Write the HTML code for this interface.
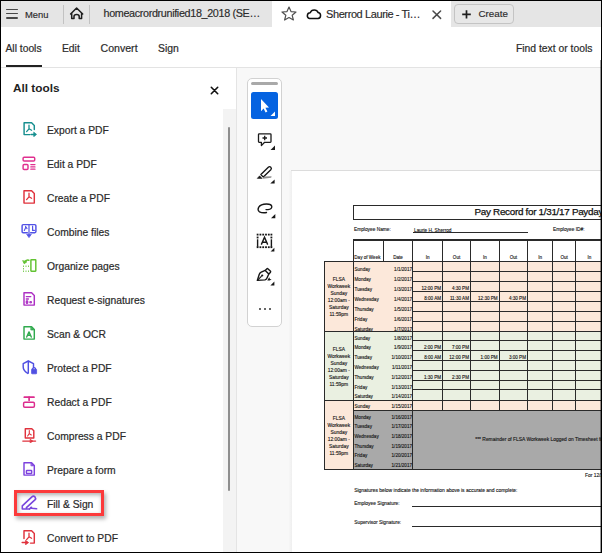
<!DOCTYPE html>
<html><head><meta charset="utf-8">
<style>
*{box-sizing:border-box}
html,body{margin:0;padding:0;width:602px;height:553px;overflow:hidden;background:#fff}
body{position:relative;font-family:"Liberation Sans",sans-serif;color:#2c2c2c}
.a{position:absolute}
.t{position:absolute;white-space:nowrap;line-height:1}
#frame{position:absolute;left:0;top:0;width:602px;height:553px;border:1px solid #000;pointer-events:none;z-index:50}
/* top tab bar */
#tabbar{left:1px;top:1px;width:600px;height:26px;background:#e5e5e5}
#tab2{left:272px;top:1px;width:179px;height:27px;background:#fff}
.sep{position:absolute;width:1.3px;background:#c2c2c2}
/* nav */
#navline{left:1px;top:67px;width:600px;height:1px;background:#e3e3e3}
/* panel */
#divider{left:236px;top:68px;width:1px;height:484px;background:#e4e4e4}
#docbg{left:237px;top:68px;width:364px;height:484px;background:#f8f8f8}
#track{left:223px;top:109px;width:13px;height:443px;background:#f3f3f3}
#thumb{left:228px;top:127px;width:2px;height:364px;background:#8e8e8e;border-radius:1px}
.tool{position:absolute;left:47px;font-size:10.3px;color:#2a2a2a;white-space:nowrap;line-height:1;-webkit-text-stroke:0.2px #2a2a2a}
.ic{position:absolute;left:21px;width:16px;height:16px}
/* toolbar */
#tb{left:247px;top:78px;width:35px;height:249px;background:#fff;border:1.7px solid #d2d2d2;border-radius:5px}
.ps{color:#151515;-webkit-text-stroke:0.12px #151515}
.pt{}
</style></head>
<body>
<div id="frame"></div>
<div id="rline" class="a" style="left:600px;top:60px;width:1px;height:493px;background:rgba(0,0,0,0.4);z-index:49"></div>
<div class="a" id="tabbar"></div>
<div class="a" id="tab2"></div>
<div class="a" id="docbg"></div>
<div class="a" id="navline"></div>
<div class="a" id="divider"></div>

<!-- TABBAR -->
<div class="a" style="left:6px;top:8.6px;width:12px;height:1.8px;background:#484848;border-radius:1px"></div>
<div class="a" style="left:6px;top:12.7px;width:12px;height:1.8px;background:#484848;border-radius:1px"></div>
<div class="a" style="left:6px;top:17px;width:12px;height:1.8px;background:#484848;border-radius:1px"></div>
<div class="t" style="left:25px;top:9.6px;font-size:9.4px;color:#2a2a2a;-webkit-text-stroke:0.15px #2a2a2a">Menu</div>
<div class="sep" style="left:63px;top:4.7px;height:19px"></div>
<svg class="a" style="left:69px;top:6px" width="15" height="14" viewBox="0 0 15 14"><path d="M1.6 8 L7.6 2 L13.7 8 M2.7 7.2 V12.5 H5 V10.4 Q5 8.6 7.6 8.6 Q10.2 8.6 10.2 10.4 V12.5 H12.6 V7.2" fill="none" stroke="#1e1e1e" stroke-width="1.5" stroke-linejoin="round" stroke-linecap="round"/></svg>
<div class="sep" style="left:89px;top:4.7px;height:19px"></div>
<div class="t" style="left:103.5px;top:8.2px;font-size:10.8px;letter-spacing:-0.35px;color:#2a2a2a;-webkit-text-stroke:0.15px #2a2a2a">homeacrordrunified18_2018 (SE…</div>
<svg class="a" style="left:281px;top:6px" width="16" height="15" viewBox="0 0 16 15"><path d="M8 1 L10 5.6 L15 6 L11.2 9.3 L12.4 14 L8 11.5 L3.6 14 L4.8 9.3 L1 6 L6 5.6 Z" fill="none" stroke="#505050" stroke-width="1.2" stroke-linejoin="round"/></svg>
<svg class="a" style="left:305px;top:8px" width="17" height="12" viewBox="0 0 17 12"><path d="M4.5 10.5 H13 A3 3 0 0 0 13.2 4.6 A4.3 4.3 0 0 0 5.2 4.8 A2.9 2.9 0 0 0 4.5 10.5 Z" fill="none" stroke="#111" stroke-width="1.5" stroke-linejoin="round"/></svg>
<div class="t" style="left:326px;top:9.2px;font-size:11px;letter-spacing:-0.4px;color:#2a2a2a;-webkit-text-stroke:0.15px #2a2a2a">Sherrod Laurie - Ti…</div>
<svg class="a" style="left:431px;top:9px" width="11" height="11" viewBox="0 0 11 11"><path d="M2 2 L9.6 9.4 M9.6 2 L2 9.4" stroke="#4a4a4a" stroke-width="1.5" stroke-linecap="round"/></svg>
<div class="a" style="left:454px;top:4px;width:60px;height:20px;border:1px solid #c4c4c4;border-radius:4px;background:#e7e7e7"></div>
<svg class="a" style="left:461px;top:9px" width="11" height="11" viewBox="0 0 11 11"><path d="M5.5 1.2 V9.6 M1.2 5.4 H9.8" stroke="#1e1e1e" stroke-width="1.7"/></svg>
<div class="t" style="left:478.5px;top:8.9px;font-size:9.8px;color:#2a2a2a;-webkit-text-stroke:0.15px #2a2a2a">Create</div>
<!-- NAV -->
<div class="t" style="left:5.5px;top:43.7px;-webkit-text-stroke:0.2px #2a2a2a;font-size:10.3px;color:#2c2c2c">All tools</div>
<div class="a" style="left:6px;top:65px;width:36px;height:2px;background:#222"></div>
<div class="t" style="left:62px;top:43.7px;-webkit-text-stroke:0.2px #2a2a2a;font-size:10.3px;color:#2c2c2c">Edit</div>
<div class="t" style="left:100.5px;top:42.7px;-webkit-text-stroke:0.2px #2a2a2a;font-size:10.6px;color:#2c2c2c">Convert</div>
<div class="t" style="left:158px;top:43.7px;-webkit-text-stroke:0.2px #2a2a2a;font-size:10.4px;color:#2c2c2c">Sign</div>
<div class="t" style="left:516px;top:43.7px;-webkit-text-stroke:0.2px #2a2a2a;font-size:10.35px;color:#2c2c2c">Find text or tools</div>

<!-- PANEL -->
<div class="t" style="left:13px;top:82.5px;font-size:11.8px;font-weight:bold;color:#1f1f1f">All tools</div>
<svg class="a" style="left:210px;top:86px" width="9" height="9" viewBox="0 0 9 9"><path d="M1.3 1.3 L7.7 7.7 M7.7 1.3 L1.3 7.7" stroke="#111" stroke-width="1.6" stroke-linecap="round"/></svg>
<div class="a" id="track"></div>
<div class="a" id="thumb"></div>
<div class="tool" style="top:125.5px">Export a PDF</div>
<div class="tool" style="top:159.5px">Edit a PDF</div>
<div class="tool" style="top:193.5px">Create a PDF</div>
<div class="tool" style="top:227.5px">Combine files</div>
<div class="tool" style="top:261.5px">Organize pages</div>
<div class="tool" style="top:295.5px">Request e-signatures</div>
<div class="tool" style="top:329.5px">Scan &amp; OCR</div>
<div class="tool" style="top:363.5px">Protect a PDF</div>
<div class="tool" style="top:397.5px">Redact a PDF</div>
<div class="tool" style="top:431.5px">Compress a PDF</div>
<div class="tool" style="top:465.5px">Prepare a form</div>
<div class="tool" style="top:499.5px">Fill &amp; Sign</div>
<div class="tool" style="top:533.5px">Convert to PDF</div>
<!-- REDBOX -->
<div class="a" style="left:14px;top:490px;width:90px;height:26px;border:3px solid #fc3a3b;box-shadow:2px 3px 4px rgba(0,0,0,0.3), inset 1px 2px 4px rgba(0,0,0,0.32);z-index:5"></div>
<!-- ICONS -->
<svg class="a" style="left:21px;top:120px" width="17" height="17" viewBox="0 0 17 17"><g fill="none" stroke="#178f8f" stroke-width="1.45" stroke-linejoin="round" stroke-linecap="round"><path d="M9 14.6 H3.1 V2.8 H10.6 L13.3 5.5 V9.4"/><path d="M8 5.2 V8.8 M8 8.8 L5.6 11.6 M8 8.8 L10.6 10.2" stroke-width="1.3"/><path d="M10.2 14.4 H13.5" stroke-width="1.5"/><path d="M13 12.4 L15.5 14.4 L13 16.4 Z" fill="#178f8f" stroke-width="0.8"/></g></svg>
<svg class="a" style="left:21px;top:154px" width="17" height="17" viewBox="0 0 17 17"><g fill="none" stroke="#e0308f" stroke-width="1.45" stroke-linejoin="round" stroke-linecap="round"><rect x="2.1" y="3.2" width="11.6" height="3.8" rx="1"/><rect x="2.1" y="10.4" width="4.9" height="5" rx="1"/><path d="M9.8 10.6 H14 M9.8 12.9 H14 M9.8 15.2 H14" stroke-width="1.2"/></g></svg>
<svg class="a" style="left:21px;top:188px" width="17" height="17" viewBox="0 0 17 17"><g fill="none" stroke="#e0323d" stroke-width="1.45" stroke-linejoin="round" stroke-linecap="round"><path d="M3 2.8 H10.6 L13.3 5.5 V15.1 H3 Z"/><path d="M8 5.2 V8.8 M8 8.8 L5.6 11.6 M8 8.8 L10.6 10.2" stroke-width="1.3"/></g></svg>
<svg class="a" style="left:21px;top:222px" width="17" height="17" viewBox="0 0 17 17"><g fill="none" stroke="#5252e6" stroke-width="1.45" stroke-linejoin="round" stroke-linecap="round"><path d="M6.3 10.7 H2.2 Q1.1 10.7 1.1 9.6 V3.7 Q1.1 2.6 2.2 2.6 H13.8 Q14.9 2.6 14.9 3.7 V9.6 Q14.9 10.7 13.8 10.7 H9.7"/><path d="M3.3 8.4 L5 5 L6 6.6 M4.6 4.4 V5.6" stroke-width="1.1"/><path d="M11.6 4.2 V8.4 H13.4" stroke-width="1.2"/><path d="M8 3 V13" stroke-width="1.2"/><path d="M5.9 12.6 L8 15.6 L10.1 12.6 Z" fill="#5252e6" stroke-width="0.8"/></g></svg>
<svg class="a" style="left:21px;top:256px" width="17" height="17" viewBox="0 0 17 17"><g fill="none" stroke="#62c232" stroke-width="1.45" stroke-linejoin="round" stroke-linecap="round"><rect x="9.9" y="3.8" width="4.9" height="11.4" rx="0.4"/><path d="M2 10.2 H2.8 M4.6 10.2 H5.4 M7.2 10.2 H8 M2 12.7 H2.8 M2 15.2 H2.8 M4.6 15.2 H5.4 M7.2 15.2 H8" stroke-width="1.4" stroke-linecap="butt"/><path d="M7.8 4.3 Q5 3.4 3.6 6.2" stroke-width="1.5"/><path d="M1.8 4.9 L3.2 7.8 L5.6 6 Z" fill="#62c232" stroke-width="0.8"/></g></svg>
<svg class="a" style="left:21px;top:290px" width="17" height="17" viewBox="0 0 17 17"><g fill="none" stroke="#ad30c4" stroke-width="1.45" stroke-linejoin="round" stroke-linecap="round"><path d="M3 2.8 H10.6 L13.3 5.5 V15.1 H3 Z"/><path d="M5.3 6.6 H9.8 M5.3 9 H7.4" stroke-width="1.3"/><rect x="5.2" y="10.8" width="1.6" height="2.6" rx="0.6" fill="#ad30c4" stroke-width="1.1"/><rect x="9.2" y="11.6" width="1.3" height="1.3" fill="#ad30c4" stroke-width="1"/></g></svg>
<svg class="a" style="left:21px;top:324px" width="17" height="17" viewBox="0 0 17 17"><g fill="none" stroke="#30aa4e" stroke-width="1.45" stroke-linejoin="round" stroke-linecap="round"><path d="M3 2.8 H10.6 L13.3 5.5 V15.1 H3 Z"/><path d="M10.2 3.4 L12.7 5.9 H10.2 Z" fill="#30aa4e" stroke-width="0.9"/><path d="M5.7 13 L8 7.9 L10.3 13 M6.5 11.3 H9.5" stroke-width="1.4"/></g></svg>
<svg class="a" style="left:21px;top:358px" width="17" height="17" viewBox="0 0 17 17"><g fill="none" stroke="#5050e2" stroke-width="1.45" stroke-linejoin="round" stroke-linecap="round"><path d="M6.8 15.4 Q2.2 12.6 2.2 9 V5.6 L7.3 3 L12.5 5.6 V9.4"/><path d="M7.3 3.3 V15"/><rect x="10.6" y="11.2" width="5" height="4.6" rx="0.5" fill="#5050e2" stroke-width="0.8"/><path d="M11.7 11.5 V10.4 Q13.1 8.9 14.5 10.4 V11.5" stroke-width="1.2"/></g></svg>
<svg class="a" style="left:21px;top:392px" width="17" height="17" viewBox="0 0 17 17"><g fill="none" stroke="#dc2c8e" stroke-width="1.45" stroke-linejoin="round" stroke-linecap="round"><path d="M3.3 5.2 H13" stroke-width="1.7"/><path d="M8.1 5.2 V8.3" stroke-width="1.7"/><rect x="2.6" y="10.2" width="10.8" height="5" rx="1.2"/></g></svg>
<svg class="a" style="left:21px;top:426px" width="17" height="17" viewBox="0 0 17 17"><g fill="none" stroke="#e0323d" stroke-width="1.45" stroke-linejoin="round" stroke-linecap="round"><path d="M4.3 2.8 H10.8 L12.8 4.8 V12 H4.3 Z"/><path d="M8.3 4.6 V7.6 M8.3 7.6 L6.6 10 M8.3 7.6 L10.3 9" stroke-width="1.1"/><path d="M1.8 15.1 H14.6" stroke-width="1.3"/><path d="M9.5 13.5 L11.8 15.1 L9.5 16.7 Z" fill="#e0323d" stroke-width="0.8"/></g></svg>
<svg class="a" style="left:21px;top:460px" width="17" height="17" viewBox="0 0 17 17"><g fill="none" stroke="#7d42de" stroke-width="1.45" stroke-linejoin="round" stroke-linecap="round"><path d="M3 2.8 H10.6 L13.3 5.5 V15.1 H3 Z"/><path d="M10.3 3.4 L12.7 5.8 H10.3 Z" fill="#7d42de" stroke-width="0.8"/><rect x="5.4" y="10.5" width="5.3" height="3" rx="0.6" stroke-width="1.4"/></g></svg>
<svg class="a" style="left:21px;top:494px;z-index:6" width="17" height="17" viewBox="0 0 17 17"><g fill="none" stroke="#7846dc" stroke-width="1.6" stroke-linejoin="round" stroke-linecap="round"><path d="M5.4 13.7 L13.9 5.9 Q15.3 4.4 14 2.9 Q12.5 1.5 10.9 2.8 L1.3 11.8 V15 H8.6"/><path d="M8.6 15 Q9.5 13.2 10.6 14.2 L15.6 14.8"/><circle cx="10.3" cy="13.7" r="1.1" fill="#7846dc" stroke="none"/></g></svg>
<svg class="a" style="left:21px;top:528px" width="17" height="17" viewBox="0 0 17 17"><g fill="none" stroke="#e0323d" stroke-width="1.45" stroke-linejoin="round" stroke-linecap="round"><path d="M3 10.5 V2.8 H10.6 L13.3 5.5 V15.1 H9.5"/><path d="M8 5.2 V8.8 M8 8.8 L5.6 11.6 M8 8.8 L10.6 10.2" stroke-width="1.3"/><path d="M1.2 14.6 H5.2" stroke-width="1.5"/><path d="M4.8 12.6 L7.6 14.6 L4.8 16.6 Z" fill="#e0323d" stroke-width="0.8"/></g></svg>

<!-- PDF -->
<div class="a" style="left:289px;top:171px;width:3px;height:382px;background:linear-gradient(90deg,#f6f6f6,#efefef)"></div><div class="a" style="left:291px;top:169.5px;width:311px;height:1.5px;background:#dcdcdc"></div>
<div class="a" style="left:292px;top:171px;width:310px;height:382px;background:#fff"></div>
<div class="a" style="left:353px;top:205px;width:260px;height:15px;border:1.3px solid #2a2a2a"></div>
<div class="t pt" style="left:474.5px;top:207.2px;font-size:9.9px;letter-spacing:-0.3px;-webkit-text-stroke:0.25px #111;color:#111">Pay Record for 1/31/17 Payday</div>
<div class="t ps" style="left:354px;top:228.2px;font-size:4.8px">Employee Name:</div>
<div class="t ps" style="left:414px;top:228.7px;font-size:4.75px">Laurie H. Sherrod</div>
<div class="a" style="left:412.5px;top:232.2px;width:115.5px;height:1px;background:#2a2a2a"></div>
<div class="t ps" style="left:553px;top:228.2px;font-size:4.8px">Employee ID#:</div>
<div class="a" style="left:353px;top:239.4px;width:249px;height:1.3px;background:#2a2a2a"></div>
<div class="a" style="left:352.9px;top:240.0px;width:1.3px;height:21.5px;background:#2a2a2a"></div>
<div class="a" style="left:382.7px;top:240.0px;width:1.3px;height:21.5px;background:#2a2a2a"></div>
<div class="a" style="left:412.09999999999997px;top:240.0px;width:1.3px;height:21.5px;background:#2a2a2a"></div>
<div class="a" style="left:442.0px;top:240.0px;width:1.3px;height:21.5px;background:#2a2a2a"></div>
<div class="a" style="left:469.9px;top:240.0px;width:1.3px;height:21.5px;background:#2a2a2a"></div>
<div class="a" style="left:498.59999999999997px;top:240.0px;width:1.3px;height:21.5px;background:#2a2a2a"></div>
<div class="a" style="left:526.9px;top:240.0px;width:1.3px;height:21.5px;background:#2a2a2a"></div>
<div class="a" style="left:552.0px;top:240.0px;width:1.3px;height:21.5px;background:#2a2a2a"></div>
<div class="a" style="left:575.1px;top:240.0px;width:1.3px;height:21.5px;background:#2a2a2a"></div>
<div class="t ps" style="left:354.3px;top:255.5px;font-size:4.6px">Day of Week</div>
<div class="t ps" style="left:383.3px;width:29.399999999999977px;text-align:center;top:256.2px;font-size:4.6px">Date</div>
<div class="t ps" style="left:412.7px;width:29.900000000000034px;text-align:center;top:256.2px;font-size:4.6px">In</div>
<div class="t ps" style="left:442.6px;width:27.899999999999977px;text-align:center;top:256.2px;font-size:4.6px">Out</div>
<div class="t ps" style="left:470.5px;width:28.69999999999999px;text-align:center;top:256.2px;font-size:4.6px">In</div>
<div class="t ps" style="left:499.2px;width:28.30000000000001px;text-align:center;top:256.2px;font-size:4.6px">Out</div>
<div class="t ps" style="left:527.5px;width:25.100000000000023px;text-align:center;top:256.2px;font-size:4.6px">In</div>
<div class="t ps" style="left:552.6px;width:23.100000000000023px;text-align:center;top:256.2px;font-size:4.6px">Out</div>
<div class="t ps" style="left:575.7px;width:27.299999999999955px;text-align:center;top:256.2px;font-size:4.6px">In</div>
<div class="a" style="left:324.3px;top:261.4px;width:278.7px;height:69.80000000000001px;background:#fce8da"></div>
<div class="t ps" style="left:324.3px;width:29px;text-align:center;top:278.29999999999995px;font-size:4.9px">FLSA</div>
<div class="t ps" style="left:324.3px;width:29px;text-align:center;top:285.24999999999994px;font-size:4.9px">Workweek</div>
<div class="t ps" style="left:324.3px;width:29px;text-align:center;top:292.19999999999993px;font-size:4.9px">Sunday</div>
<div class="t ps" style="left:324.3px;width:29px;text-align:center;top:299.15px;font-size:4.9px">12:00am -</div>
<div class="t ps" style="left:324.3px;width:29px;text-align:center;top:306.09999999999997px;font-size:4.9px">Saturday</div>
<div class="t ps" style="left:324.3px;width:29px;text-align:center;top:313.04999999999995px;font-size:4.9px">11:59pm</div>
<div class="t ps" style="left:354.5px;top:267.79999999999995px;font-size:4.6px">Sunday</div>
<div class="t ps" style="left:383px;width:29px;text-align:right;top:267.79999999999995px;font-size:4.6px">1/1/2017</div>
<div class="a" style="left:412.5px;top:260.9px;width:190px;height:1.1px;background:#2a2a2a"></div>
<div class="t ps" style="left:354.5px;top:277.79999999999995px;font-size:4.6px">Monday</div>
<div class="t ps" style="left:383px;width:29px;text-align:right;top:277.79999999999995px;font-size:4.6px">1/2/2017</div>
<div class="a" style="left:412.5px;top:270.9px;width:190px;height:1.1px;background:#2a2a2a"></div>
<div class="t ps" style="left:354.5px;top:288.0px;font-size:4.6px">Tuesday</div>
<div class="t ps" style="left:383px;width:29px;text-align:right;top:288.0px;font-size:4.6px">1/3/2017</div>
<div class="t ps" style="left:412.7px;width:28.400000000000034px;text-align:right;top:287.0px;font-size:4.6px">12:00 PM</div>
<div class="t ps" style="left:442.6px;width:26.399999999999977px;text-align:right;top:287.0px;font-size:4.6px">4:30 PM</div>
<div class="a" style="left:412.5px;top:281.1px;width:190px;height:1.1px;background:#2a2a2a"></div>
<div class="t ps" style="left:354.5px;top:297.7px;font-size:4.6px">Wednesday</div>
<div class="t ps" style="left:383px;width:29px;text-align:right;top:297.7px;font-size:4.6px">1/4/2017</div>
<div class="t ps" style="left:412.7px;width:28.400000000000034px;text-align:right;top:296.7px;font-size:4.6px">8:00 AM</div>
<div class="t ps" style="left:442.6px;width:26.399999999999977px;text-align:right;top:296.7px;font-size:4.6px">11:30 AM</div>
<div class="t ps" style="left:470.5px;width:27.19999999999999px;text-align:right;top:296.7px;font-size:4.6px">12:30 PM</div>
<div class="t ps" style="left:499.2px;width:26.80000000000001px;text-align:right;top:296.7px;font-size:4.6px">4:30 PM</div>
<div class="a" style="left:412.5px;top:290.8px;width:190px;height:1.1px;background:#2a2a2a"></div>
<div class="t ps" style="left:354.5px;top:307.9px;font-size:4.6px">Thursday</div>
<div class="t ps" style="left:383px;width:29px;text-align:right;top:307.9px;font-size:4.6px">1/5/2017</div>
<div class="a" style="left:412.5px;top:301.0px;width:190px;height:1.1px;background:#2a2a2a"></div>
<div class="t ps" style="left:354.5px;top:317.79999999999995px;font-size:4.6px">Friday</div>
<div class="t ps" style="left:383px;width:29px;text-align:right;top:317.79999999999995px;font-size:4.6px">1/6/2017</div>
<div class="a" style="left:412.5px;top:310.9px;width:190px;height:1.1px;background:#2a2a2a"></div>
<div class="t ps" style="left:354.5px;top:327.59999999999997px;font-size:4.6px">Saturday</div>
<div class="t ps" style="left:383px;width:29px;text-align:right;top:327.59999999999997px;font-size:4.6px">1/7/2017</div>
<div class="a" style="left:412.5px;top:320.7px;width:190px;height:1.1px;background:#2a2a2a"></div>
<div class="a" style="left:324px;top:260.9px;width:279px;height:1.15px;background:#2a2a2a"></div>
<div class="a" style="left:323.7px;top:261.4px;width:1.3px;height:69.80000000000001px;background:#2a2a2a"></div>
<div class="a" style="left:352.9px;top:261.4px;width:1.3px;height:69.80000000000001px;background:#2a2a2a"></div>
<div class="a" style="left:412px;top:261.4px;width:1.3px;height:69.80000000000001px;background:#2a2a2a"></div>
<div class="a" style="left:442.0px;top:261.4px;width:1.3px;height:69.80000000000001px;background:#2a2a2a"></div>
<div class="a" style="left:469.9px;top:261.4px;width:1.3px;height:69.80000000000001px;background:#2a2a2a"></div>
<div class="a" style="left:498.59999999999997px;top:261.4px;width:1.3px;height:69.80000000000001px;background:#2a2a2a"></div>
<div class="a" style="left:526.9px;top:261.4px;width:1.3px;height:69.80000000000001px;background:#2a2a2a"></div>
<div class="a" style="left:552.0px;top:261.4px;width:1.3px;height:69.80000000000001px;background:#2a2a2a"></div>
<div class="a" style="left:575.1px;top:261.4px;width:1.3px;height:69.80000000000001px;background:#2a2a2a"></div>
<div class="a" style="left:324.3px;top:331.2px;width:278.7px;height:68.80000000000001px;background:#eaf0e1"></div>
<div class="t ps" style="left:324.3px;width:29px;text-align:center;top:348.09999999999997px;font-size:4.9px">FLSA</div>
<div class="t ps" style="left:324.3px;width:29px;text-align:center;top:355.04999999999995px;font-size:4.9px">Workweek</div>
<div class="t ps" style="left:324.3px;width:29px;text-align:center;top:361.99999999999994px;font-size:4.9px">Sunday</div>
<div class="t ps" style="left:324.3px;width:29px;text-align:center;top:368.95px;font-size:4.9px">12:00am -</div>
<div class="t ps" style="left:324.3px;width:29px;text-align:center;top:375.9px;font-size:4.9px">Saturday</div>
<div class="t ps" style="left:324.3px;width:29px;text-align:center;top:382.84999999999997px;font-size:4.9px">11:59pm</div>
<div class="t ps" style="left:354.5px;top:336.59999999999997px;font-size:4.6px">Sunday</div>
<div class="t ps" style="left:383px;width:29px;text-align:right;top:336.59999999999997px;font-size:4.6px">1/8/2017</div>
<div class="a" style="left:412.5px;top:330.7px;width:190px;height:1.1px;background:#2a2a2a"></div>
<div class="t ps" style="left:354.5px;top:345.9px;font-size:4.6px">Monday</div>
<div class="t ps" style="left:383px;width:29px;text-align:right;top:345.9px;font-size:4.6px">1/9/2017</div>
<div class="t ps" style="left:412.7px;width:28.400000000000034px;text-align:right;top:345.9px;font-size:4.6px">2:00 PM</div>
<div class="t ps" style="left:442.6px;width:26.399999999999977px;text-align:right;top:345.9px;font-size:4.6px">7:00 PM</div>
<div class="a" style="left:412.5px;top:340.0px;width:190px;height:1.1px;background:#2a2a2a"></div>
<div class="t ps" style="left:354.5px;top:356.0px;font-size:4.6px">Tuesday</div>
<div class="t ps" style="left:383px;width:29px;text-align:right;top:356.0px;font-size:4.6px">1/10/2017</div>
<div class="t ps" style="left:412.7px;width:28.400000000000034px;text-align:right;top:356.0px;font-size:4.6px">8:00 AM</div>
<div class="t ps" style="left:442.6px;width:26.399999999999977px;text-align:right;top:356.0px;font-size:4.6px">12:00 PM</div>
<div class="t ps" style="left:470.5px;width:27.19999999999999px;text-align:right;top:356.0px;font-size:4.6px">1:00 PM</div>
<div class="t ps" style="left:499.2px;width:26.80000000000001px;text-align:right;top:356.0px;font-size:4.6px">3:00 PM</div>
<div class="a" style="left:412.5px;top:350.1px;width:190px;height:1.1px;background:#2a2a2a"></div>
<div class="t ps" style="left:354.5px;top:366.09999999999997px;font-size:4.6px">Wednesday</div>
<div class="t ps" style="left:383px;width:29px;text-align:right;top:366.09999999999997px;font-size:4.6px">1/11/2017</div>
<div class="a" style="left:412.5px;top:360.2px;width:190px;height:1.1px;background:#2a2a2a"></div>
<div class="t ps" style="left:354.5px;top:376.0px;font-size:4.6px">Thursday</div>
<div class="t ps" style="left:383px;width:29px;text-align:right;top:376.0px;font-size:4.6px">1/12/2017</div>
<div class="t ps" style="left:412.7px;width:28.400000000000034px;text-align:right;top:376.0px;font-size:4.6px">1:30 PM</div>
<div class="t ps" style="left:442.6px;width:26.399999999999977px;text-align:right;top:376.0px;font-size:4.6px">2:30 PM</div>
<div class="a" style="left:412.5px;top:370.1px;width:190px;height:1.1px;background:#2a2a2a"></div>
<div class="t ps" style="left:354.5px;top:385.9px;font-size:4.6px">Friday</div>
<div class="t ps" style="left:383px;width:29px;text-align:right;top:385.9px;font-size:4.6px">1/13/2017</div>
<div class="a" style="left:412.5px;top:380.0px;width:190px;height:1.1px;background:#2a2a2a"></div>
<div class="t ps" style="left:354.5px;top:395.0px;font-size:4.6px">Saturday</div>
<div class="t ps" style="left:383px;width:29px;text-align:right;top:395.0px;font-size:4.6px">1/14/2017</div>
<div class="a" style="left:412.5px;top:389.1px;width:190px;height:1.1px;background:#2a2a2a"></div>
<div class="a" style="left:324px;top:330.7px;width:279px;height:1.15px;background:#2a2a2a"></div>
<div class="a" style="left:323.7px;top:331.2px;width:1.3px;height:68.80000000000001px;background:#2a2a2a"></div>
<div class="a" style="left:352.9px;top:331.2px;width:1.3px;height:68.80000000000001px;background:#2a2a2a"></div>
<div class="a" style="left:412px;top:331.2px;width:1.3px;height:68.80000000000001px;background:#2a2a2a"></div>
<div class="a" style="left:442.0px;top:331.2px;width:1.3px;height:68.80000000000001px;background:#2a2a2a"></div>
<div class="a" style="left:469.9px;top:331.2px;width:1.3px;height:68.80000000000001px;background:#2a2a2a"></div>
<div class="a" style="left:498.59999999999997px;top:331.2px;width:1.3px;height:68.80000000000001px;background:#2a2a2a"></div>
<div class="a" style="left:526.9px;top:331.2px;width:1.3px;height:68.80000000000001px;background:#2a2a2a"></div>
<div class="a" style="left:552.0px;top:331.2px;width:1.3px;height:68.80000000000001px;background:#2a2a2a"></div>
<div class="a" style="left:575.1px;top:331.2px;width:1.3px;height:68.80000000000001px;background:#2a2a2a"></div>
<div class="a" style="left:324.3px;top:400.0px;width:278.7px;height:69.0px;background:#fce8da"></div>
<div class="a" style="left:353.5px;top:410.8px;width:249.5px;height:58.19999999999999px;background:#a9a9a9"></div>
<div class="t ps" style="left:324.3px;width:29px;text-align:center;top:416.9px;font-size:4.9px">FLSA</div>
<div class="t ps" style="left:324.3px;width:29px;text-align:center;top:423.84999999999997px;font-size:4.9px">Workweek</div>
<div class="t ps" style="left:324.3px;width:29px;text-align:center;top:430.79999999999995px;font-size:4.9px">Sunday</div>
<div class="t ps" style="left:324.3px;width:29px;text-align:center;top:437.75px;font-size:4.9px">12:00am -</div>
<div class="t ps" style="left:324.3px;width:29px;text-align:center;top:444.7px;font-size:4.9px">Saturday</div>
<div class="t ps" style="left:324.3px;width:29px;text-align:center;top:451.65px;font-size:4.9px">11:59pm</div>
<div class="t ps" style="left:354.5px;top:404.7px;font-size:4.6px">Sunday</div>
<div class="t ps" style="left:383px;width:29px;text-align:right;top:404.7px;font-size:4.6px">1/15/2017</div>
<div class="a" style="left:412.5px;top:399.5px;width:190px;height:1.1px;background:#2a2a2a"></div>
<div class="t ps" style="left:354.5px;top:415.5px;font-size:4.6px">Monday</div>
<div class="t ps" style="left:383px;width:29px;text-align:right;top:415.5px;font-size:4.6px">1/16/2017</div>
<div class="t ps" style="left:354.5px;top:425.2px;font-size:4.6px">Tuesday</div>
<div class="t ps" style="left:383px;width:29px;text-align:right;top:425.2px;font-size:4.6px">1/17/2017</div>
<div class="t ps" style="left:354.5px;top:434.9px;font-size:4.6px">Wednesday</div>
<div class="t ps" style="left:383px;width:29px;text-align:right;top:434.9px;font-size:4.6px">1/18/2017</div>
<div class="t ps" style="left:354.5px;top:444.59999999999997px;font-size:4.6px">Thursday</div>
<div class="t ps" style="left:383px;width:29px;text-align:right;top:444.59999999999997px;font-size:4.6px">1/19/2017</div>
<div class="t ps" style="left:354.5px;top:454.3px;font-size:4.6px">Friday</div>
<div class="t ps" style="left:383px;width:29px;text-align:right;top:454.3px;font-size:4.6px">1/20/2017</div>
<div class="t ps" style="left:354.5px;top:464.0px;font-size:4.6px">Saturday</div>
<div class="t ps" style="left:383px;width:29px;text-align:right;top:464.0px;font-size:4.6px">1/21/2017</div>
<div class="a" style="left:324px;top:399.5px;width:279px;height:1.15px;background:#2a2a2a"></div>
<div class="a" style="left:323.7px;top:400.0px;width:1.3px;height:69.0px;background:#2a2a2a"></div>
<div class="a" style="left:352.9px;top:400.0px;width:1.3px;height:69.0px;background:#2a2a2a"></div>
<div class="a" style="left:412px;top:400.0px;width:1.3px;height:69.0px;background:#2a2a2a"></div>
<div class="a" style="left:442.0px;top:400.0px;width:1.3px;height:10.800000000000011px;background:#2a2a2a"></div>
<div class="a" style="left:469.9px;top:400.0px;width:1.3px;height:10.800000000000011px;background:#2a2a2a"></div>
<div class="a" style="left:498.59999999999997px;top:400.0px;width:1.3px;height:10.800000000000011px;background:#2a2a2a"></div>
<div class="a" style="left:526.9px;top:400.0px;width:1.3px;height:10.800000000000011px;background:#2a2a2a"></div>
<div class="a" style="left:552.0px;top:400.0px;width:1.3px;height:10.800000000000011px;background:#2a2a2a"></div>
<div class="a" style="left:575.1px;top:400.0px;width:1.3px;height:10.800000000000011px;background:#2a2a2a"></div>
<div class="a" style="left:353px;top:410.3px;width:250px;height:1.1px;background:#2a2a2a"></div>
<div class="a" style="left:324px;top:468.5px;width:279px;height:1.15px;background:#2a2a2a"></div>
<div class="t ps" style="left:475.3px;top:437.8px;font-size:4.9px">*** Remainder of FLSA Workweek Logged on Timesheet for 1/22/2017 - 1/28/2017</div>
<div class="t ps" style="left:585px;top:473.8px;font-size:4.9px">For 12/25/2016</div>
<div class="t ps" style="left:354.2px;top:489.2px;font-size:4.97px">Signatures below indicate the information above is accurate and complete:</div>
<div class="t ps" style="left:354.2px;top:501.9px;font-size:4.9px">Employee Signature:</div>
<div class="a" style="left:412px;top:506px;width:190px;height:1.2px;background:#2a2a2a"></div>
<div class="t ps" style="left:354.2px;top:520.7px;font-size:4.9px">Supervisor Signature:</div>
<div class="a" style="left:412px;top:525.8px;width:190px;height:1.2px;background:#2a2a2a"></div>
<!-- /PDF -->
<!-- TOOLBAR -->
<div class="a" id="tb"></div>
<div class="a" style="left:251px;top:82px;width:27px;height:3px;background:#a9a9a9;border-radius:1.5px"></div>
<div class="a" style="left:251px;top:92px;width:27px;height:27px;background:#0563e1;border-radius:2.5px"></div>
<svg class="a" style="left:251px;top:92px" width="27" height="27" viewBox="0 0 27 27"><path d="M10 7 L10 19.2 L12.6 16.6 L14.6 20.4 L16.4 19.5 L14.4 15.8 L18 15.6 Z" fill="#fff"/><path d="M24 19.5 V24 H19.5 Z" fill="#fff"/></svg>
<svg class="a" style="left:251px;top:126px" width="27" height="27" viewBox="0 0 27 27"><path d="M8.2 7.8 Q7.5 7.8 7.5 8.5 V15.6 Q7.5 16.3 8.2 16.3 H10.4 V19.6 L13.6 16.3 H19.3 Q20 16.3 20 15.6 V8.5 Q20 7.8 19.3 7.8 Z" fill="none" stroke="#1b1b1b" stroke-width="1.3" stroke-linejoin="round"/><path d="M13.7 9.8 V14.3 M11.5 12 H16" stroke="#1b1b1b" stroke-width="1.3"/><path d="M24 19.5 V24 H19.5 Z" fill="#1b1b1b"/></svg>
<svg class="a" style="left:251px;top:159px" width="27" height="27" viewBox="0 0 27 27"><path d="M9.9 15.6 L17.3 8.2 Q18.6 7 19.8 8.2 Q21 9.4 19.8 10.7 L12.3 18.1 Z" fill="none" stroke="#161616" stroke-width="1.35" stroke-linejoin="round"/><path d="M6.2 19.4 L8.6 16.8 L11.2 19.5 Z" fill="#161616" stroke="#161616" stroke-width="0.5" stroke-linejoin="round"/><path d="M11.6 19.8 L13.6 17.6 L20.6 17.2 L20.2 18.8 Z" fill="#8f8f8f"/><path d="M23.6 20.4 V24.6 H19.3 Z" fill="#161616"/></svg>
<svg class="a" style="left:251.5px;top:193.5px" width="27" height="27" viewBox="0 0 27 27"><path d="M14.5 18.5 Q10.3 19.2 7.5 17.8 Q5.2 16.4 6.6 13.4 Q8.6 10 14.5 10 Q19.6 10.1 19.8 12.6 Q20 15 16 15.6 L14 15.6" fill="none" stroke="#161616" stroke-width="1.35" stroke-linecap="round"/><path d="M23.3 20 V24.3 H19 Z" fill="#161616"/></svg>
<svg class="a" style="left:251px;top:227px" width="27" height="27" viewBox="0 0 27 27"><g fill="#161616"><rect x="5.7" y="6.7" width="1.8" height="1.8"/><rect x="8.5" y="6.7" width="1.8" height="1.8"/><rect x="11.3" y="6.7" width="1.8" height="1.8"/><rect x="14.1" y="6.7" width="1.8" height="1.8"/><rect x="16.9" y="6.7" width="1.8" height="1.8"/><rect x="19.5" y="6.7" width="1.8" height="1.8"/><rect x="5.7" y="19.3" width="1.8" height="1.8"/><rect x="8.5" y="19.3" width="1.8" height="1.8"/><rect x="11.3" y="19.3" width="1.8" height="1.8"/><rect x="14.1" y="19.3" width="1.8" height="1.8"/><rect x="16.9" y="19.3" width="1.8" height="1.8"/><rect x="19.5" y="19.3" width="1.8" height="1.8"/><rect x="5.7" y="9.6" width="1.8" height="1.8"/><rect x="19.5" y="9.6" width="1.8" height="1.8"/><rect x="5.9" y="12.3" width="1.4" height="7.5"/><rect x="19.7" y="12.3" width="1.4" height="7.5"/></g><path d="M10.3 17.6 L13.5 10.3 L16.7 17.6 M11.4 15.2 H15.6" fill="none" stroke="#161616" stroke-width="1.4"/><path d="M23.4 20.8 V24.5 H19.6 Z" fill="#161616"/></svg>
<svg class="a" style="left:251px;top:261px" width="27" height="27" viewBox="0 0 27 27"><g fill="none" stroke="#161616" stroke-width="1.4" stroke-linejoin="round"><path d="M6.3 19.4 L8.3 13.2 Q8.8 11.8 10.2 11.2 L14.2 9.4 L17.8 13 L16 17 Q15.4 18.4 14 18.9 Z"/><path d="M14.2 9.4 L15.7 7.9 Q16.4 7.2 17.1 7.9 L19.3 10.1 Q20 10.8 19.3 11.5 L17.8 13"/><path d="M6.6 19.1 L10.6 15.1" stroke-width="1.2"/></g><circle cx="11.2" cy="14.5" r="1.1" fill="#161616"/><path d="M16.3 19.4 L18.2 16.3 L19 18 L20.6 18.5 L18.6 19.5 Z" fill="#161616"/><path d="M23.4 20.4 V24.4 H19.4 Z" fill="#161616"/></svg>
<div class="a" style="left:258.5px;top:308.3px;width:2.2px;height:2.2px;background:#333;border-radius:50%"></div>
<div class="a" style="left:263.6px;top:308.3px;width:2.2px;height:2.2px;background:#333;border-radius:50%"></div>
<div class="a" style="left:268.7px;top:308.3px;width:2.2px;height:2.2px;background:#333;border-radius:50%"></div>
</body></html>
